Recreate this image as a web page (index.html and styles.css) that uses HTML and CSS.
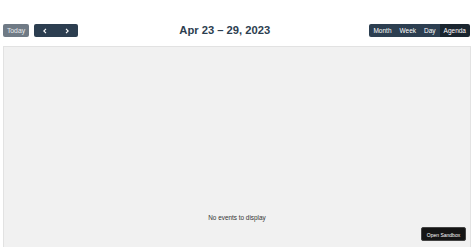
FILE: index.html
```html
<!DOCTYPE html>
<html>
<head>
<meta charset="utf-8">
<link rel="stylesheet" href="styles.css">
</head>
<body>
<div class="cal">
  <div class="toolbar">
    <div class="chunk left">
      <button class="btn today">Today</button>
      <div class="group">
        <button class="btn nav"><svg width="6" height="6" viewBox="0 0 6 6"><path d="M4 0.8 L1.8 3 L4 5.2" fill="none" stroke="#fff" stroke-width="1.1"/></svg></button>
        <button class="btn nav"><svg width="6" height="6" viewBox="0 0 6 6"><path d="M2 0.8 L4.2 3 L2 5.2" fill="none" stroke="#fff" stroke-width="1.1"/></svg></button>
      </div>
    </div>
    <h2 class="title">Apr 23 – 29, 2023</h2>
    <div class="chunk right">
      <div class="group">
        <button class="btn view">Month</button>
        <button class="btn view">Week</button>
        <button class="btn view">Day</button>
        <button class="btn view active">Agenda</button>
      </div>
    </div>
  </div>
  <div class="viewbox">
    <div class="empty">No events to display</div>
  </div>
</div>
<a class="sandbox">Open Sandbox</a>
</body>
</html>
```
FILE: styles.css
```css
html, body {
  margin: 0;
  padding: 0;
  height: 248px;
  overflow: hidden;
  background: #fff;
  font-family: "Liberation Sans", Arial, sans-serif;
}
.cal {
  padding: 24px 3px 0 3px;
}
.toolbar {
  display: flex;
  justify-content: space-between;
  align-items: center;
  height: 13px;
  margin-bottom: 9px;
}
.chunk {
  display: flex;
  align-items: center;
}
.chunk.right {
  padding-right: 1px;
}
.left {
  gap: 5px;
}
.btn {
  border: none;
  margin: 0;
  font-family: inherit;
  font-size: 6.8px;
  line-height: 13px;
  height: 13px;
  color: #fff;
  background: #2c3e50;
  padding: 0;
  display: flex;
  align-items: center;
  justify-content: center;
}
.today {
  width: 26px;
  border-radius: 2px;
  background: #6f7a85;
  color: #e9ebed;
}
.group {
  display: flex;
  border-radius: 2px;
  overflow: hidden;
}
.nav {
  width: 22px;
}
.view {
  padding: 0 4px;
  font-size: 6.5px;
}
.view.active {
  background: #1a252f;
}
.title {
  margin: 0;
  font-size: 11.2px;
  font-weight: bold;
  color: #2c3e50;
  line-height: 13px;
  padding-left: 2px;
}
.viewbox {
  height: 200px;
  border: 1px solid #e2e2e2;
  border-bottom: none;
  background: #f1f1f1;
  display: flex;
  justify-content: center;
  align-items: flex-start;
}
.empty {
  margin-top: 167px;
  font-size: 6.4px;
  color: #333;
}
.sandbox {
  position: fixed;
  right: 8px;
  bottom: 7px;
  width: 45px;
  height: 14px;
  background: #151515;
  color: #fff;
  border-radius: 2px;
  font-size: 5px;
  line-height: 14px;
  text-align: center;
  border: 0.5px solid #444;
  box-sizing: border-box;
}
```
